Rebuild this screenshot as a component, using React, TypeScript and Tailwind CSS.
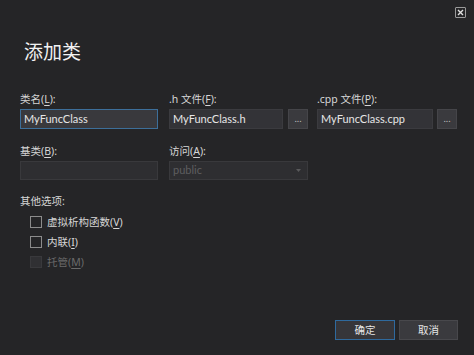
import React from "react";

const font = "font-['Noto_Sans','Noto_Sans_CJK_SC',sans-serif]";
const val = "font-['Lato','Noto_Sans_CJK_SC',sans-serif] text-[11px] leading-[18px] text-[#e6e6e6]";

function Key({ k }: { k: string }) {
  return <span className="underline underline-offset-2">{k}</span>;
}

function Label({ text, k, tail = "):" }: { text: string; k: string; tail?: string }) {
  return (
    <div className="h-[14px] leading-[14px] text-[10.5px] text-[#d6d6d6] whitespace-nowrap">
      {text}(<Key k={k} />
      {tail}
    </div>
  );
}

function Dots() {
  return (
    <button className="w-[20px] h-[20px] bg-[#3a3a3e] border border-[#454549] text-[#c8c8c8] text-[9px] leading-[14px] flex items-center justify-center">
      ...
    </button>
  );
}

function Check({ label, k, disabled }: { label: string; k: string; disabled?: boolean }) {
  return (
    <div className="h-[20px] flex items-center pl-[30px] gap-[5px]">
      <span
        className={
          disabled
            ? "w-[12px] h-[12px] bg-[#303033] border border-[#39393c]"
            : "w-[12px] h-[12px] border border-[#8c8c8c]"
        }
      />
      <span className={"text-[10.5px] leading-[14px] " + (disabled ? "text-[#6a6a6a]" : "text-[#d6d6d6]")}>
        {label}(<Key k={k} />)
      </span>
    </div>
  );
}

export default function App() {
  return (
    <div className={`w-[474px] h-[355px] bg-[#252527] flex flex-col ${font}`}>
      {/* close */}
      <div className="flex justify-end pt-[7px] pr-[8px]">
        <span className="w-[11px] h-[11px] border border-[#9a9a9a] rounded-[1px] flex items-center justify-center">
          <svg width="7" height="7" viewBox="0 0 7 7">
            <path d="M1 1L6 6M6 1L1 6" stroke="#e0e0e0" strokeWidth="1.4" />
          </svg>
        </span>
      </div>

      <h1 className="mt-[22px] ml-[24px] h-[24px] text-[19px] leading-[24px] text-[#f2f2f2]">添加类</h1>

      {/* row 1 */}
      <div className="mt-[28px] flex pl-[20px]">
        <div className="w-[138px] flex flex-col gap-[3px]">
          <Label text="类名" k="L" />
          <div className={`h-[20px] bg-[#39393d] border border-[#3d6f9a] px-[3px] ${val}`}>MyFuncClass</div>
        </div>
        <div className="ml-[11px] w-[139px] flex flex-col gap-[3px]">
          <Label text=".h 文件" k="F" />
          <div className="flex gap-[5px]">
            <div className={`w-[114px] h-[20px] bg-[#333337] border border-[#3b3b3f] px-[3px] ${val}`}>
              MyFuncClass.h
            </div>
            <Dots />
          </div>
        </div>
        <div className="ml-[9px] w-[140px] flex flex-col gap-[3px]">
          <Label text=".cpp 文件" k="P" />
          <div className="flex gap-[4px]">
            <div className={`w-[116px] h-[20px] bg-[#333337] border border-[#3b3b3f] px-[3px] ${val}`}>
              MyFuncClass.cpp
            </div>
            <Dots />
          </div>
        </div>
      </div>

      {/* row 2 */}
      <div className="mt-[15px] flex pl-[20px]">
        <div className="w-[138px] flex flex-col gap-[3px]">
          <Label text="基类" k="B" />
          <div className="h-[19px] bg-[#2e2e31] border border-[#39393c]" />
        </div>
        <div className="ml-[11px] w-[139px] flex flex-col gap-[3px]">
          <Label text="访问" k="A" />
          <div className="h-[19px] bg-[#2e2e31] border border-[#39393c] px-[3px] flex items-center justify-between">
            <span className="font-['Lato',sans-serif] text-[11px] text-[#5e5e60]">public</span>
            <svg width="5" height="3" viewBox="0 0 5 3" className="mr-[3px]">
              <path d="M0 0H5L2.5 3Z" fill="#5a5a5c" />
            </svg>
          </div>
        </div>
      </div>

      {/* options */}
      <div className="mt-[14px] pl-[20px] h-[14px] leading-[14px] text-[10.5px] text-[#d6d6d6]">其他选项:</div>
      <div className="mt-[4px] flex flex-col">
        <Check label="虚拟析构函数" k="V" />
        <Check label="内联" k="I" />
        <Check label="托管" k="M" disabled />
      </div>

      {/* footer */}
      <div className="mt-auto mb-[15px] flex justify-end gap-[4px] pr-[16px]">
        <button className="w-[60px] h-[20px] bg-[#36363a] border border-[#2f6a9e] text-[10.5px] text-[#e6e6e6] leading-[18px]">
          确定
        </button>
        <button className="w-[59px] h-[20px] bg-[#3a3a3e] border border-[#48484c] text-[10.5px] text-[#e6e6e6] leading-[18px]">
          取消
        </button>
      </div>
    </div>
  );
}
